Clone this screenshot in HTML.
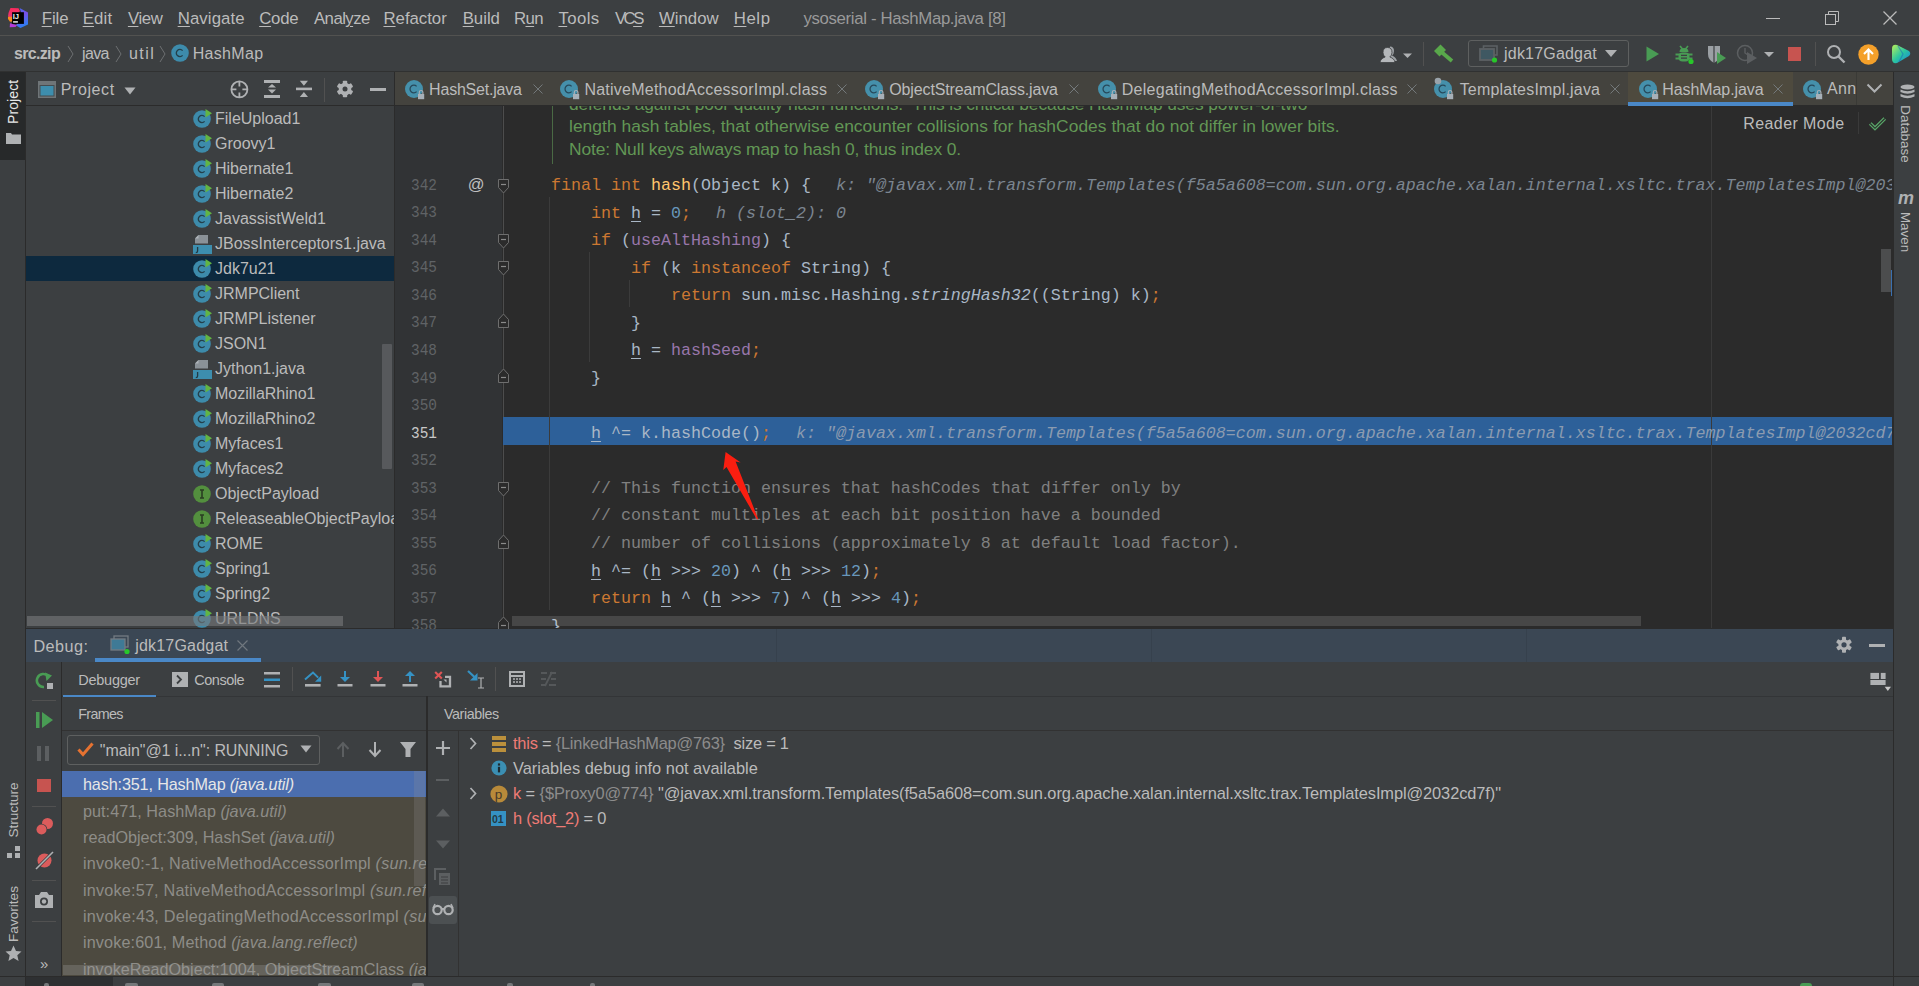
<!DOCTYPE html><html><head><meta charset="utf-8"><style>html,body{margin:0;padding:0;width:1919px;height:986px;overflow:hidden;background:#3c3f41;}body>div,body>svg{position:absolute;}.t{white-space:pre;font-family:"Liberation Sans",sans-serif;}.m{white-space:pre;font-family:"Liberation Mono",monospace;font-size:16.67px;}</style></head><body><div style="left:0px;top:35px;width:1919px;height:1px;background:#525250;"></div><div style="left:0px;top:71px;width:1919px;height:1px;background:#303131;"></div><svg style="left:7px;top:7px;" width="22" height="22" viewBox="0 0 22 22">
<defs><linearGradient id="lgb" x1="0" y1="0" x2="0.3" y2="1"><stop offset="0" stop-color="#3a6df0"/><stop offset="0.45" stop-color="#7a4fe6"/><stop offset="1" stop-color="#2f7df2"/></linearGradient>
<linearGradient id="lgp" x1="0" y1="0" x2="0" y2="1"><stop offset="0" stop-color="#ff2a5c"/><stop offset="1" stop-color="#e0357a"/></linearGradient></defs>
<polygon points="12.6,1 21,5.5 21,17.5 13.5,21 9.2,18.6 14,5" fill="url(#lgb)"/>
<polygon points="3.5,1 11.5,1.3 13,4 6,12 1,9.5 1.5,6" fill="url(#lgp)"/>
<polygon points="1,9.8 5.5,9.8 5.5,14.5 3,14.8 1,12" fill="#f98a1d"/>
<polygon points="3,16.2 10,18.3 8.5,20 2.7,20.3" fill="#b53ad8"/>
<rect x="5.1" y="5.2" width="11.8" height="11.7" fill="#000"/>
<text x="5.7" y="11.9" font-family="Liberation Sans" font-weight="bold" font-size="7.6" fill="#f2f2f2">IJ</text>
<rect x="6.1" y="14" width="4.8" height="1.8" fill="#c4c4c4"/>
</svg><div class="t" style="left:41.66px;top:9.40px;line-height:20px;font-size:16.8px;color:#bbbbbb;letter-spacing:-0.011px;text-underline-offset:2px;"><u>F</u>ile</div><div class="t" style="left:82.66px;top:9.40px;line-height:20px;font-size:16.8px;color:#bbbbbb;letter-spacing:0.177px;text-underline-offset:2px;"><u>E</u>dit</div><div class="t" style="left:127.92px;top:9.40px;line-height:20px;font-size:16.8px;color:#bbbbbb;letter-spacing:-0.345px;text-underline-offset:2px;"><u>V</u>iew</div><div class="t" style="left:177.66px;top:9.40px;line-height:20px;font-size:16.8px;color:#bbbbbb;letter-spacing:0.106px;text-underline-offset:2px;"><u>N</u>avigate</div><div class="t" style="left:259.16px;top:9.40px;line-height:20px;font-size:16.8px;color:#bbbbbb;letter-spacing:-0.213px;text-underline-offset:2px;"><u>C</u>ode</div><div class="t" style="left:314.00px;top:9.40px;line-height:20px;font-size:16.8px;color:#bbbbbb;letter-spacing:-0.575px;text-underline-offset:2px;">Anal<u>y</u>ze</div><div class="t" style="left:383.46px;top:9.40px;line-height:20px;font-size:16.8px;color:#bbbbbb;letter-spacing:-0.015px;text-underline-offset:2px;"><u>R</u>efactor</div><div class="t" style="left:462.66px;top:9.40px;line-height:20px;font-size:16.8px;color:#bbbbbb;letter-spacing:-0.007px;text-underline-offset:2px;"><u>B</u>uild</div><div class="t" style="left:514.06px;top:9.40px;line-height:20px;font-size:16.8px;color:#bbbbbb;letter-spacing:-0.688px;text-underline-offset:2px;">R<u>u</u>n</div><div class="t" style="left:558.46px;top:9.40px;line-height:20px;font-size:16.8px;color:#bbbbbb;letter-spacing:0.374px;text-underline-offset:2px;"><u>T</u>ools</div><div class="t" style="left:614.92px;top:9.40px;line-height:20px;font-size:16.8px;color:#bbbbbb;letter-spacing:-2.542px;text-underline-offset:2px;">VC<u>S</u></div><div class="t" style="left:658.92px;top:9.40px;line-height:20px;font-size:16.8px;color:#bbbbbb;letter-spacing:-0.005px;text-underline-offset:2px;"><u>W</u>indow</div><div class="t" style="left:733.66px;top:9.40px;line-height:20px;font-size:16.8px;color:#bbbbbb;letter-spacing:0.631px;text-underline-offset:2px;"><u>H</u>elp</div><div class="t" style="left:803.50px;top:9.00px;line-height:20px;font-size:16.8px;color:#9a9a9a;letter-spacing:-0.346px;">ysoserial - HashMap.java [8]</div><div style="left:1766px;top:18px;width:14px;height:1px;background:#bbbbbb;"></div><svg style="left:1824px;top:10px;" width="16" height="16" viewBox="0 0 16 16"><rect x="1.5" y="4.5" width="10" height="10" fill="none" stroke="#bbbbbb"/><path d="M4.5 4.5V1.5H14.5V11.5H11.5" fill="none" stroke="#bbbbbb"/></svg><svg style="left:1882px;top:10px;" width="16" height="16" viewBox="0 0 16 16"><path d="M1.5 1.5L14.5 14.5M14.5 1.5L1.5 14.5" stroke="#bbbbbb" stroke-width="1.3"/></svg><div class="t" style="left:13.94px;top:44.00px;line-height:20px;font-size:16px;color:#bbbbbb;letter-spacing:-0.657px;font-weight:bold;">src.zip</div><svg style="left:67px;top:45px;" width="8" height="18" viewBox="0 0 8 18"><path d="M1 1L6 9L1 17" fill="none" stroke="#6d6f71" stroke-width="1"/></svg><div class="t" style="left:82.00px;top:44.00px;line-height:20px;font-size:16px;color:#bbbbbb;letter-spacing:-0.620px;">java</div><svg style="left:115px;top:45px;" width="8" height="18" viewBox="0 0 8 18"><path d="M1 1L6 9L1 17" fill="none" stroke="#6d6f71" stroke-width="1"/></svg><div class="t" style="left:128.96px;top:44.00px;line-height:20px;font-size:16px;color:#bbbbbb;letter-spacing:1.427px;">util</div><svg style="left:159px;top:45px;" width="8" height="18" viewBox="0 0 8 18"><path d="M1 1L6 9L1 17" fill="none" stroke="#6d6f71" stroke-width="1"/></svg><svg style="left:171px;top:44px;" width="18" height="18" viewBox="0 0 18 18"><circle cx="9" cy="9" r="8.8" fill="#3d8bab"/><path d="M11.6 6.6A3.6 3.6 0 1 0 11.6 11.4" fill="none" stroke="#243f4a" stroke-width="1.35"/></svg><div class="t" style="left:192.72px;top:44.00px;line-height:20px;font-size:16px;color:#bbbbbb;letter-spacing:0.307px;">HashMap</div><svg style="left:1380px;top:45px;" width="36" height="20" viewBox="0 0 36 20"><path d="M10 1.5Q14 1.5 14 6Q14 9 12 10.5Q16 12 17 16H8Z" fill="#9ea2a6"/>
<path d="M7.5 2.5Q12 2.5 12 7.5Q12 10.5 9.8 12Q14.5 13.5 15 17.5H0Q0.5 13.5 5.2 12Q3 10.5 3 7.5Q3 2.5 7.5 2.5Z" fill="#b4b7ba" stroke="#3c3f41" stroke-width="0.8"/>
<path d="M23 8.5H32L27.5 13Z" fill="#afb1b3"/></svg><div style="left:1423px;top:42px;width:1px;height:24px;background:#515151;"></div><svg style="left:1433px;top:44px;" width="22" height="20" viewBox="0 0 22 20"><path d="M1 7L7.5 0.5L13 6L6.5 12.5Z" fill="#59a84b"/><path d="M9 8.5L19 17" stroke="#59a84b" stroke-width="3.8"/></svg><div style="left:1468px;top:40px;width:159px;height:25px;border:1px solid #5e6060;border-radius:3px;"></div><svg style="left:1479px;top:45px;" width="20" height="18" viewBox="0 0 20 18"><path d="M4.5 3.5V1H18V10H15" fill="none" stroke="#5c6164" stroke-width="1.6"/><rect x="1" y="4" width="14" height="11" fill="#3f5862" stroke="#5c6164" stroke-width="1.8"/><circle cx="15.5" cy="15" r="2.6" fill="#28c72a"/></svg><div class="t" style="left:1504.10px;top:44.20px;line-height:20px;font-size:16px;color:#bbbbbb;letter-spacing:0.186px;">jdk17Gadgat</div><svg style="left:1604px;top:49px;" width="14" height="9" viewBox="0 0 14 9"><path d="M1 1H13L7 8Z" fill="#afb1b3"/></svg><svg style="left:1646px;top:46px;" width="14" height="16" viewBox="0 0 14 16"><path d="M0.5 0.5L13 8L0.5 15.5Z" fill="#499c54"/></svg><svg style="left:1675px;top:45px;" width="22" height="20" viewBox="0 0 22 20"><path d="M5 1L7.5 4M13 1L10.5 4" stroke="#499c54" stroke-width="1.6"/><path d="M4.5 7Q4.5 3 9 3Q13.5 3 13.5 7Z" fill="#499c54"/>
<rect x="3.5" y="7.5" width="11" height="9" rx="4" fill="#499c54"/><path d="M0.5 9.5H17.5M0.5 13.5H17.5" stroke="#499c54" stroke-width="1.8"/><path d="M6 10.3H12M6 13.2H12" stroke="#3c3f41" stroke-width="1.2"/><circle cx="16" cy="16.5" r="2.6" fill="#28c72a"/></svg><svg style="left:1706px;top:44px;" width="22" height="21" viewBox="0 0 22 21"><path d="M2 2H14V10Q14 16 8 19Q2 16 2 10Z" fill="#9ba0a4"/><path d="M8 2V19" stroke="#3c3f41" stroke-width="1.2"/><path d="M11 8L20 14L11 20Z" fill="#499c54"/></svg><svg style="left:1736px;top:44px;" width="40" height="21" viewBox="0 0 40 21"><circle cx="9" cy="9" r="7.5" fill="none" stroke="#5c5f61" stroke-width="1.5"/><path d="M9 4V9L12 11" stroke="#5c5f61" stroke-width="1.4" fill="none"/><path d="M11 8L21 14L11 20Z" fill="#5c5f61"/><path d="M28 8H38L33 13Z" fill="#afb1b3"/></svg><div style="left:1788px;top:47px;width:13px;height:14px;background:#c75450;"></div><div style="left:1815px;top:42px;width:1px;height:24px;background:#515151;"></div><svg style="left:1826px;top:44px;" width="21" height="20" viewBox="0 0 21 20"><circle cx="8" cy="8" r="6" fill="none" stroke="#afb1b3" stroke-width="2"/><path d="M12.5 12.5L18.5 18.5" stroke="#afb1b3" stroke-width="2.4"/></svg><svg style="left:1858px;top:44px;" width="21" height="21" viewBox="0 0 21 21"><circle cx="10.5" cy="10.5" r="10.2" fill="#f4a02a"/><path d="M10.5 16V6M6 10L10.5 5.5L15 10" stroke="#fff" stroke-width="2.1" fill="none"/></svg><svg style="left:1891px;top:43px;" width="21" height="22" viewBox="0 0 21 22"><defs><linearGradient id="cwm" x1="0" y1="0" x2="1" y2="1"><stop offset="0" stop-color="#b8f05a"/><stop offset="0.5" stop-color="#2bc6a0"/><stop offset="1" stop-color="#1a7fe0"/></linearGradient></defs>
<path d="M1 6Q1 1 6 2L18 8Q20.5 10.5 18 13L6 20Q1 21 1 16Z" fill="url(#cwm)"/><path d="M7 3L12 11L8 19" fill="none" stroke="#1a5fc0" stroke-width="1.2" opacity="0.5"/></svg><div style="left:25px;top:72px;width:1px;height:914px;background:#2b2b2b;"></div><div style="left:0px;top:72px;width:25px;height:88px;background:#27292a;"></div><div class="t" style="left:-9.3px;top:92.4px;width:44px;height:20px;line-height:20px;font-size:14px;letter-spacing:0.1px;color:#e8e8e8;transform:rotate(-90deg);text-align:center;">Project</div><svg style="left:6px;top:131px;" width="15" height="14" viewBox="0 0 15 14"><path d="M0 2H5L6 3.5H15V13H0Z" fill="#afb1b3"/></svg><div class="t" style="left:-16px;top:799.5px;width:60px;height:20px;line-height:20px;font-size:13.6px;color:#bbbbbb;transform:rotate(-90deg);text-align:center;">Structure</div><svg style="left:7px;top:846px;" width="14" height="13" viewBox="0 0 14 13"><rect x="8" y="0" width="5" height="5" fill="#afb1b3"/><rect x="0" y="7" width="5" height="5" fill="#afb1b3"/><rect x="8" y="7" width="5" height="5" fill="#afb1b3"/></svg><div class="t" style="left:-17px;top:903.5px;width:62px;height:20px;line-height:20px;font-size:13.6px;color:#bbbbbb;transform:rotate(-90deg);text-align:center;">Favorites</div><svg style="left:5px;top:945px;" width="17" height="17" viewBox="0 0 17 17"><path d="M8.5 0.5L11 6L16.5 6.5L12.3 10.2L13.6 16L8.5 13L3.4 16L4.7 10.2L0.5 6.5L6 6Z" fill="#afb1b3"/></svg><div style="left:26px;top:105px;width:368px;height:1px;background:#2b2b2b;"></div><div style="left:394px;top:72px;width:1px;height:556px;background:#2b2b2b;"></div><svg style="left:38px;top:81px;" width="18" height="17" viewBox="0 0 18 17"><rect x="0" y="0" width="18" height="17" fill="#6f7578"/><rect x="1.5" y="4" width="15" height="11.5" fill="#464c4f"/><rect x="2.5" y="5" width="13" height="9.5" fill="#3d8eae"/></svg><div class="t" style="left:60.72px;top:80.30px;line-height:20px;font-size:16px;color:#bbbbbb;letter-spacing:0.600px;">Project</div><svg style="left:124px;top:86.5px;" width="12" height="8" viewBox="0 0 12 8"><path d="M0.5 0.5H11.5L6 7.5Z" fill="#afb1b3"/></svg><svg style="left:229.5px;top:79.5px;" width="19" height="19" viewBox="0 0 19 19"><circle cx="9.4" cy="9.4" r="8" fill="none" stroke="#afb1b3" stroke-width="1.8"/><path d="M9.4 1.5V6.4M9.4 12.4V17.3M1.5 9.4H6.4M12.4 9.4H17.3" stroke="#afb1b3" stroke-width="1.8"/></svg><svg style="left:264px;top:79px;" width="17" height="20" viewBox="0 0 17 20"><rect x="0" y="1" width="16" height="3" fill="#afb1b3"/><rect x="0" y="16" width="16" height="3" fill="#afb1b3"/><path d="M4 8.6L8 5L12 8.6ZM4 10.4L8 14.5L12 10.4Z" fill="#afb1b3"/></svg><svg style="left:295px;top:79px;" width="18" height="20" viewBox="0 0 18 20"><rect x="1" y="8.6" width="16" height="2.6" fill="#afb1b3"/><path d="M4.8 1.8H13L8.9 6.8ZM4.8 18H13L8.9 13Z" fill="#afb1b3"/></svg><div style="left:324px;top:78px;width:1px;height:24px;background:#515151;"></div><svg style="left:336px;top:80px;" width="18" height="18" viewBox="0 0 18 18"><g transform="translate(9 9)" fill="#afb1b3"><circle r="6.3"/>
<rect x="-2.2" y="-8.2" width="4.4" height="16.4" rx="0.8"/><rect x="-2.2" y="-8.2" width="4.4" height="16.4" rx="0.8" transform="rotate(60)"/><rect x="-2.2" y="-8.2" width="4.4" height="16.4" rx="0.8" transform="rotate(120)"/>
<circle r="2.5" fill="#3c3f41"/></g></svg><div style="left:370px;top:88px;width:16px;height:3px;background:#afb1b3;"></div><div style="left:26px;top:106px;width:368px;height:522px;overflow:hidden;"><svg style="position:absolute;left:167px;top:2.5px" width="20" height="20" viewBox="0 0 20 20"><circle cx="9" cy="10" r="8.8" fill="#3d8bab"/><path d="M11.6 7.6A3.6 3.6 0 1 0 11.6 12.4" fill="none" stroke="#243f4a" stroke-width="1.35"/>
<path d="M12.5 0L19 4.2L12.5 8.4Z" fill="#62b543"/></svg><div class="t" style="position:absolute;left:189px;top:2.5px;line-height:20px;font-size:16px;color:#bbbbbb;">FileUpload1</div><svg style="position:absolute;left:167px;top:27.5px" width="20" height="20" viewBox="0 0 20 20"><circle cx="9" cy="10" r="8.8" fill="#3d8bab"/><path d="M11.6 7.6A3.6 3.6 0 1 0 11.6 12.4" fill="none" stroke="#243f4a" stroke-width="1.35"/>
<path d="M12.5 0L19 4.2L12.5 8.4Z" fill="#62b543"/></svg><div class="t" style="position:absolute;left:189px;top:27.5px;line-height:20px;font-size:16px;color:#bbbbbb;">Groovy1</div><svg style="position:absolute;left:167px;top:52.5px" width="20" height="20" viewBox="0 0 20 20"><circle cx="9" cy="10" r="8.8" fill="#3d8bab"/><path d="M11.6 7.6A3.6 3.6 0 1 0 11.6 12.4" fill="none" stroke="#243f4a" stroke-width="1.35"/>
<path d="M12.5 0L19 4.2L12.5 8.4Z" fill="#62b543"/></svg><div class="t" style="position:absolute;left:189px;top:52.5px;line-height:20px;font-size:16px;color:#bbbbbb;">Hibernate1</div><svg style="position:absolute;left:167px;top:77.5px" width="20" height="20" viewBox="0 0 20 20"><circle cx="9" cy="10" r="8.8" fill="#3d8bab"/><path d="M11.6 7.6A3.6 3.6 0 1 0 11.6 12.4" fill="none" stroke="#243f4a" stroke-width="1.35"/>
<path d="M12.5 0L19 4.2L12.5 8.4Z" fill="#62b543"/></svg><div class="t" style="position:absolute;left:189px;top:77.5px;line-height:20px;font-size:16px;color:#bbbbbb;">Hibernate2</div><svg style="position:absolute;left:167px;top:102.5px" width="20" height="20" viewBox="0 0 20 20"><circle cx="9" cy="10" r="8.8" fill="#3d8bab"/><path d="M11.6 7.6A3.6 3.6 0 1 0 11.6 12.4" fill="none" stroke="#243f4a" stroke-width="1.35"/>
<path d="M12.5 0L19 4.2L12.5 8.4Z" fill="#62b543"/></svg><div class="t" style="position:absolute;left:189px;top:102.5px;line-height:20px;font-size:16px;color:#bbbbbb;">JavassistWeld1</div><svg style="position:absolute;left:167px;top:127.5px" width="20" height="20" viewBox="0 0 20 20"><path d="M5.5 1H15V9.5H2V4.5Z" fill="#8a9197"/><path d="M5.5 1V4.5H2Z" fill="#aeb4b9"/><rect x="0" y="11" width="19" height="9" fill="#3d8eae"/><path d="M4.6 13V17Q4.6 18.6 2.8 18.6" stroke="#233a44" stroke-width="1.3" fill="none"/></svg><div class="t" style="position:absolute;left:189px;top:127.5px;line-height:20px;font-size:16px;color:#bbbbbb;">JBossInterceptors1.java</div><div style="position:absolute;left:0px;top:150.0px;width:368px;height:25px;background:#0d293e;"></div><svg style="position:absolute;left:167px;top:152.5px" width="20" height="20" viewBox="0 0 20 20"><circle cx="9" cy="10" r="8.8" fill="#3d8bab"/><path d="M11.6 7.6A3.6 3.6 0 1 0 11.6 12.4" fill="none" stroke="#243f4a" stroke-width="1.35"/>
<path d="M12.5 0L19 4.2L12.5 8.4Z" fill="#62b543"/></svg><div class="t" style="position:absolute;left:189px;top:152.5px;line-height:20px;font-size:16px;color:#bbbbbb;">Jdk7u21</div><svg style="position:absolute;left:167px;top:177.5px" width="20" height="20" viewBox="0 0 20 20"><circle cx="9" cy="10" r="8.8" fill="#3d8bab"/><path d="M11.6 7.6A3.6 3.6 0 1 0 11.6 12.4" fill="none" stroke="#243f4a" stroke-width="1.35"/>
<path d="M12.5 0L19 4.2L12.5 8.4Z" fill="#62b543"/></svg><div class="t" style="position:absolute;left:189px;top:177.5px;line-height:20px;font-size:16px;color:#bbbbbb;">JRMPClient</div><svg style="position:absolute;left:167px;top:202.5px" width="20" height="20" viewBox="0 0 20 20"><circle cx="9" cy="10" r="8.8" fill="#3d8bab"/><path d="M11.6 7.6A3.6 3.6 0 1 0 11.6 12.4" fill="none" stroke="#243f4a" stroke-width="1.35"/>
<path d="M12.5 0L19 4.2L12.5 8.4Z" fill="#62b543"/></svg><div class="t" style="position:absolute;left:189px;top:202.5px;line-height:20px;font-size:16px;color:#bbbbbb;">JRMPListener</div><svg style="position:absolute;left:167px;top:227.5px" width="20" height="20" viewBox="0 0 20 20"><circle cx="9" cy="10" r="8.8" fill="#3d8bab"/><path d="M11.6 7.6A3.6 3.6 0 1 0 11.6 12.4" fill="none" stroke="#243f4a" stroke-width="1.35"/>
<path d="M12.5 0L19 4.2L12.5 8.4Z" fill="#62b543"/></svg><div class="t" style="position:absolute;left:189px;top:227.5px;line-height:20px;font-size:16px;color:#bbbbbb;">JSON1</div><svg style="position:absolute;left:167px;top:252.5px" width="20" height="20" viewBox="0 0 20 20"><path d="M5.5 1H15V9.5H2V4.5Z" fill="#8a9197"/><path d="M5.5 1V4.5H2Z" fill="#aeb4b9"/><rect x="0" y="11" width="19" height="9" fill="#3d8eae"/><path d="M4.6 13V17Q4.6 18.6 2.8 18.6" stroke="#233a44" stroke-width="1.3" fill="none"/></svg><div class="t" style="position:absolute;left:189px;top:252.5px;line-height:20px;font-size:16px;color:#bbbbbb;">Jython1.java</div><svg style="position:absolute;left:167px;top:277.5px" width="20" height="20" viewBox="0 0 20 20"><circle cx="9" cy="10" r="8.8" fill="#3d8bab"/><path d="M11.6 7.6A3.6 3.6 0 1 0 11.6 12.4" fill="none" stroke="#243f4a" stroke-width="1.35"/>
<path d="M12.5 0L19 4.2L12.5 8.4Z" fill="#62b543"/></svg><div class="t" style="position:absolute;left:189px;top:277.5px;line-height:20px;font-size:16px;color:#bbbbbb;">MozillaRhino1</div><svg style="position:absolute;left:167px;top:302.5px" width="20" height="20" viewBox="0 0 20 20"><circle cx="9" cy="10" r="8.8" fill="#3d8bab"/><path d="M11.6 7.6A3.6 3.6 0 1 0 11.6 12.4" fill="none" stroke="#243f4a" stroke-width="1.35"/>
<path d="M12.5 0L19 4.2L12.5 8.4Z" fill="#62b543"/></svg><div class="t" style="position:absolute;left:189px;top:302.5px;line-height:20px;font-size:16px;color:#bbbbbb;">MozillaRhino2</div><svg style="position:absolute;left:167px;top:327.5px" width="20" height="20" viewBox="0 0 20 20"><circle cx="9" cy="10" r="8.8" fill="#3d8bab"/><path d="M11.6 7.6A3.6 3.6 0 1 0 11.6 12.4" fill="none" stroke="#243f4a" stroke-width="1.35"/>
<path d="M12.5 0L19 4.2L12.5 8.4Z" fill="#62b543"/></svg><div class="t" style="position:absolute;left:189px;top:327.5px;line-height:20px;font-size:16px;color:#bbbbbb;">Myfaces1</div><svg style="position:absolute;left:167px;top:352.5px" width="20" height="20" viewBox="0 0 20 20"><circle cx="9" cy="10" r="8.8" fill="#3d8bab"/><path d="M11.6 7.6A3.6 3.6 0 1 0 11.6 12.4" fill="none" stroke="#243f4a" stroke-width="1.35"/>
<path d="M12.5 0L19 4.2L12.5 8.4Z" fill="#62b543"/></svg><div class="t" style="position:absolute;left:189px;top:352.5px;line-height:20px;font-size:16px;color:#bbbbbb;">Myfaces2</div><svg style="position:absolute;left:167px;top:377.5px" width="20" height="20" viewBox="0 0 20 20"><circle cx="9" cy="10" r="8.8" fill="#538f3e"/><path d="M7 6H11M9 6V14M7 14H11" stroke="#2a3d22" stroke-width="1.6"/></svg><div class="t" style="position:absolute;left:189px;top:377.5px;line-height:20px;font-size:16px;color:#bbbbbb;">ObjectPayload</div><svg style="position:absolute;left:167px;top:402.5px" width="20" height="20" viewBox="0 0 20 20"><circle cx="9" cy="10" r="8.8" fill="#538f3e"/><path d="M7 6H11M9 6V14M7 14H11" stroke="#2a3d22" stroke-width="1.6"/></svg><div class="t" style="position:absolute;left:189px;top:402.5px;line-height:20px;font-size:16px;color:#bbbbbb;">ReleaseableObjectPayload</div><svg style="position:absolute;left:167px;top:427.5px" width="20" height="20" viewBox="0 0 20 20"><circle cx="9" cy="10" r="8.8" fill="#3d8bab"/><path d="M11.6 7.6A3.6 3.6 0 1 0 11.6 12.4" fill="none" stroke="#243f4a" stroke-width="1.35"/>
<path d="M12.5 0L19 4.2L12.5 8.4Z" fill="#62b543"/></svg><div class="t" style="position:absolute;left:189px;top:427.5px;line-height:20px;font-size:16px;color:#bbbbbb;">ROME</div><svg style="position:absolute;left:167px;top:452.5px" width="20" height="20" viewBox="0 0 20 20"><circle cx="9" cy="10" r="8.8" fill="#3d8bab"/><path d="M11.6 7.6A3.6 3.6 0 1 0 11.6 12.4" fill="none" stroke="#243f4a" stroke-width="1.35"/>
<path d="M12.5 0L19 4.2L12.5 8.4Z" fill="#62b543"/></svg><div class="t" style="position:absolute;left:189px;top:452.5px;line-height:20px;font-size:16px;color:#bbbbbb;">Spring1</div><svg style="position:absolute;left:167px;top:477.5px" width="20" height="20" viewBox="0 0 20 20"><circle cx="9" cy="10" r="8.8" fill="#3d8bab"/><path d="M11.6 7.6A3.6 3.6 0 1 0 11.6 12.4" fill="none" stroke="#243f4a" stroke-width="1.35"/>
<path d="M12.5 0L19 4.2L12.5 8.4Z" fill="#62b543"/></svg><div class="t" style="position:absolute;left:189px;top:477.5px;line-height:20px;font-size:16px;color:#bbbbbb;">Spring2</div><svg style="position:absolute;left:167px;top:502.5px" width="20" height="20" viewBox="0 0 20 20"><circle cx="9" cy="10" r="8.8" fill="#3d8bab"/><path d="M11.6 7.6A3.6 3.6 0 1 0 11.6 12.4" fill="none" stroke="#243f4a" stroke-width="1.35"/>
<path d="M12.5 0L19 4.2L12.5 8.4Z" fill="#62b543"/></svg><div class="t" style="position:absolute;left:189px;top:502.5px;line-height:20px;font-size:16px;color:#bbbbbb;">URLDNS</div></div><div style="left:382px;top:344px;width:10px;height:125px;background:rgba(110,112,114,0.55);border-radius:1px;"></div><div style="left:27px;top:616px;width:316px;height:10px;background:rgba(120,122,124,0.6);"></div><div style="left:395px;top:72px;width:1498px;height:33px;background:#44433e;"></div><div style="left:395px;top:105px;width:1498px;height:1px;background:#2b2b2b;"></div><div style="left:1628px;top:72px;width:165px;height:33px;background:#4e4a3e;"></div><div style="left:1628px;top:102px;width:165px;height:4px;background:#4a88c7;"></div><svg style="left:405.3px;top:79px;" width="21" height="21" viewBox="0 0 21 21"><circle cx="9" cy="10" r="9" fill="#4590ab"/><path d="M11.6 7.4A3.8 3.8 0 1 0 11.6 12.6" fill="none" stroke="#27485a" stroke-width="1.25"/>
<rect x="13" y="15" width="6.2" height="5.2" fill="#a7b0b8"/><path d="M14.3 15V13.3A1.8 1.8 0 0 1 17.9 13.3V15" fill="none" stroke="#a7b0b8" stroke-width="1.2"/></svg><div class="t" style="left:429.12px;top:80.00px;line-height:20px;font-size:16px;color:#bbbbbb;letter-spacing:-0.213px;">HashSet.java</div><svg style="left:532.5px;top:84px;" width="10" height="10" viewBox="0 0 10 10"><path d="M0.5 0.5L9.5 9.5M9.5 0.5L0.5 9.5" stroke="#73787a" stroke-width="1"/></svg><svg style="left:560.3px;top:79px;" width="21" height="21" viewBox="0 0 21 21"><circle cx="9" cy="10" r="9" fill="#4590ab"/><path d="M11.6 7.4A3.8 3.8 0 1 0 11.6 12.6" fill="none" stroke="#27485a" stroke-width="1.25"/>
<rect x="13" y="15" width="6.2" height="5.2" fill="#a7b0b8"/><path d="M14.3 15V13.3A1.8 1.8 0 0 1 17.9 13.3V15" fill="none" stroke="#a7b0b8" stroke-width="1.2"/></svg><div class="t" style="left:584.42px;top:80.00px;line-height:20px;font-size:16px;color:#bbbbbb;letter-spacing:0.240px;">NativeMethodAccessorImpl.class</div><svg style="left:837px;top:84px;" width="10" height="10" viewBox="0 0 10 10"><path d="M0.5 0.5L9.5 9.5M9.5 0.5L0.5 9.5" stroke="#73787a" stroke-width="1"/></svg><svg style="left:864.9px;top:79px;" width="21" height="21" viewBox="0 0 21 21"><circle cx="9" cy="10" r="9" fill="#4590ab"/><path d="M11.6 7.4A3.8 3.8 0 1 0 11.6 12.6" fill="none" stroke="#27485a" stroke-width="1.25"/>
<rect x="13" y="15" width="6.2" height="5.2" fill="#a7b0b8"/><path d="M14.3 15V13.3A1.8 1.8 0 0 1 17.9 13.3V15" fill="none" stroke="#a7b0b8" stroke-width="1.2"/></svg><div class="t" style="left:889.28px;top:80.00px;line-height:20px;font-size:16px;color:#bbbbbb;letter-spacing:-0.137px;">ObjectStreamClass.java</div><svg style="left:1069px;top:84px;" width="10" height="10" viewBox="0 0 10 10"><path d="M0.5 0.5L9.5 9.5M9.5 0.5L0.5 9.5" stroke="#73787a" stroke-width="1"/></svg><svg style="left:1098.3px;top:79px;" width="21" height="21" viewBox="0 0 21 21"><circle cx="9" cy="10" r="9" fill="#4590ab"/><path d="M11.6 7.4A3.8 3.8 0 1 0 11.6 12.6" fill="none" stroke="#27485a" stroke-width="1.25"/>
<rect x="13" y="15" width="6.2" height="5.2" fill="#a7b0b8"/><path d="M14.3 15V13.3A1.8 1.8 0 0 1 17.9 13.3V15" fill="none" stroke="#a7b0b8" stroke-width="1.2"/></svg><div class="t" style="left:1121.72px;top:80.00px;line-height:20px;font-size:16px;color:#bbbbbb;letter-spacing:0.274px;">DelegatingMethodAccessorImpl.class</div><svg style="left:1407px;top:84px;" width="10" height="10" viewBox="0 0 10 10"><path d="M0.5 0.5L9.5 9.5M9.5 0.5L0.5 9.5" stroke="#73787a" stroke-width="1"/></svg><svg style="left:1434.3px;top:79px;" width="21" height="21" viewBox="0 0 21 21"><circle cx="9" cy="10" r="9" fill="#4590ab"/><path d="M11.6 7.4A3.8 3.8 0 1 0 11.6 12.6" fill="none" stroke="#27485a" stroke-width="1.25"/>
<rect x="13" y="15" width="6.2" height="5.2" fill="#a7b0b8"/><path d="M14.3 15V13.3A1.8 1.8 0 0 1 17.9 13.3V15" fill="none" stroke="#a7b0b8" stroke-width="1.2"/></svg><div class="t" style="left:1459.68px;top:80.00px;line-height:20px;font-size:16px;color:#bbbbbb;letter-spacing:0.198px;">TemplatesImpl.java</div><svg style="left:1610px;top:84px;" width="10" height="10" viewBox="0 0 10 10"><path d="M0.5 0.5L9.5 9.5M9.5 0.5L0.5 9.5" stroke="#73787a" stroke-width="1"/></svg><svg style="left:1639.3px;top:79px;" width="21" height="21" viewBox="0 0 21 21"><circle cx="9" cy="10" r="9" fill="#4590ab"/><path d="M11.6 7.4A3.8 3.8 0 1 0 11.6 12.6" fill="none" stroke="#27485a" stroke-width="1.25"/>
<rect x="13" y="15" width="6.2" height="5.2" fill="#a7b0b8"/><path d="M14.3 15V13.3A1.8 1.8 0 0 1 17.9 13.3V15" fill="none" stroke="#a7b0b8" stroke-width="1.2"/></svg><div class="t" style="left:1662.32px;top:80.00px;line-height:20px;font-size:16px;color:#bbbbbb;letter-spacing:-0.087px;">HashMap.java</div><svg style="left:1773px;top:84px;" width="10" height="10" viewBox="0 0 10 10"><path d="M0.5 0.5L9.5 9.5M9.5 0.5L0.5 9.5" stroke="#73787a" stroke-width="1"/></svg><svg style="left:1434px;top:77px;" width="8" height="8" viewBox="0 0 8 8"><circle cx="4" cy="4" r="3.3" fill="#9aa3aa"/></svg><div style="left:1803px;top:72px;width:53px;height:33px;overflow:hidden;"><svg style="position:absolute;left:-0.5px;top:7px" width="21" height="21" viewBox="0 0 21 21"><circle cx="9" cy="10" r="9" fill="#4590ab"/><path d="M11.6 7.4A3.8 3.8 0 1 0 11.6 12.6" fill="none" stroke="#27485a" stroke-width="1.25"/>
<rect x="13" y="15" width="6.2" height="5.2" fill="#a7b0b8"/><path d="M14.3 15V13.3A1.8 1.8 0 0 1 17.9 13.3V15" fill="none" stroke="#a7b0b8" stroke-width="1.2"/></svg><div class="t" style="position:absolute;left:24px;top:7px;line-height:20px;font-size:16px;letter-spacing:0.35px;color:#bbbbbb;">AnnotationInvocationHandler.class</div></div><div style="left:1856px;top:72px;width:1px;height:33px;background:#3a3a36;"></div><svg style="left:1866px;top:83px;" width="17" height="11" viewBox="0 0 17 11"><path d="M1.5 1.5L8.5 8.5L15.5 1.5" fill="none" stroke="#afb1b3" stroke-width="2"/></svg><div style="left:395px;top:106px;width:107px;height:522px;background:#313335;"></div><div style="left:502px;top:106px;width:1391px;height:522px;background:#2b2b2b;"></div><div style="left:1893px;top:72px;width:1px;height:914px;background:#2b2b2b;"></div><div style="left:26px;top:628px;width:1867px;height:1px;background:#2b2b2b;"></div><div style="left:503px;top:416.97px;width:1389px;height:28px;background:#2d6099;"></div><div style="left:503px;top:106px;width:1px;height:522px;background:#4d4d4d;"></div><div style="left:503px;top:416.97px;width:1px;height:28px;background:#2d6099;"></div><div style="left:1711px;top:106px;width:1px;height:522px;background:#3a3a3a;"></div><div style="left:549px;top:197px;width:1px;height:413px;background:#3b3b3b;"></div><div style="left:589px;top:252px;width:1px;height:110px;background:#3b3b3b;"></div><div style="left:629px;top:280px;width:1px;height:27px;background:#3b3b3b;"></div><div style="left:552px;top:106px;width:1px;height:58px;background:#4a6a44;"></div><div style="left:560px;top:106px;width:1150px;height:58px;overflow:hidden;"><div class="t" style="position:absolute;left:9px;top:-12.90px;line-height:22px;font-size:17.4px;letter-spacing:-0.12px;color:#629755;">defends against poor quality hash functions.  This is critical because HashMap uses power-of-two</div><div class="t" style="position:absolute;left:9px;top:9.40px;line-height:22px;font-size:17.4px;letter-spacing:0.043px;color:#629755;">length hash tables, that otherwise encounter collisions for hashCodes that do not differ in lower bits.</div><div class="t" style="position:absolute;left:9px;top:31.70px;line-height:22px;font-size:17.4px;letter-spacing:-0.124px;color:#629755;">Note: Null keys always map to hash 0, thus index 0.</div></div><div class="m" style="left:402px;top:171.80px;width:35px;text-align:right;line-height:28px;font-size:16.4px;color:#606366;transform:scaleX(0.88);transform-origin:100% 50%;">342</div><div class="m" style="left:402px;top:199.33px;width:35px;text-align:right;line-height:28px;font-size:16.4px;color:#606366;transform:scaleX(0.88);transform-origin:100% 50%;">343</div><div class="m" style="left:402px;top:226.86px;width:35px;text-align:right;line-height:28px;font-size:16.4px;color:#606366;transform:scaleX(0.88);transform-origin:100% 50%;">344</div><div class="m" style="left:402px;top:254.39px;width:35px;text-align:right;line-height:28px;font-size:16.4px;color:#606366;transform:scaleX(0.88);transform-origin:100% 50%;">345</div><div class="m" style="left:402px;top:281.92px;width:35px;text-align:right;line-height:28px;font-size:16.4px;color:#606366;transform:scaleX(0.88);transform-origin:100% 50%;">346</div><div class="m" style="left:402px;top:309.45px;width:35px;text-align:right;line-height:28px;font-size:16.4px;color:#606366;transform:scaleX(0.88);transform-origin:100% 50%;">347</div><div class="m" style="left:402px;top:336.98px;width:35px;text-align:right;line-height:28px;font-size:16.4px;color:#606366;transform:scaleX(0.88);transform-origin:100% 50%;">348</div><div class="m" style="left:402px;top:364.51px;width:35px;text-align:right;line-height:28px;font-size:16.4px;color:#606366;transform:scaleX(0.88);transform-origin:100% 50%;">349</div><div class="m" style="left:402px;top:392.04px;width:35px;text-align:right;line-height:28px;font-size:16.4px;color:#606366;transform:scaleX(0.88);transform-origin:100% 50%;">350</div><div class="m" style="left:402px;top:419.57px;width:35px;text-align:right;line-height:28px;font-size:16.4px;color:#c8c8c8;transform:scaleX(0.88);transform-origin:100% 50%;">351</div><div class="m" style="left:402px;top:447.10px;width:35px;text-align:right;line-height:28px;font-size:16.4px;color:#606366;transform:scaleX(0.88);transform-origin:100% 50%;">352</div><div class="m" style="left:402px;top:474.63px;width:35px;text-align:right;line-height:28px;font-size:16.4px;color:#606366;transform:scaleX(0.88);transform-origin:100% 50%;">353</div><div class="m" style="left:402px;top:502.16px;width:35px;text-align:right;line-height:28px;font-size:16.4px;color:#606366;transform:scaleX(0.88);transform-origin:100% 50%;">354</div><div class="m" style="left:402px;top:529.69px;width:35px;text-align:right;line-height:28px;font-size:16.4px;color:#606366;transform:scaleX(0.88);transform-origin:100% 50%;">355</div><div class="m" style="left:402px;top:557.22px;width:35px;text-align:right;line-height:28px;font-size:16.4px;color:#606366;transform:scaleX(0.88);transform-origin:100% 50%;">356</div><div class="m" style="left:402px;top:584.75px;width:35px;text-align:right;line-height:28px;font-size:16.4px;color:#606366;transform:scaleX(0.88);transform-origin:100% 50%;">357</div><div class="m" style="left:402px;top:612.28px;width:35px;text-align:right;line-height:28px;font-size:16.4px;color:#606366;transform:scaleX(0.88);transform-origin:100% 50%;">358</div><div class="t" style="left:467.76px;top:174.00px;line-height:20px;font-size:16.5px;color:#c0c0c0;letter-spacing:0.000px;">@</div><svg style="left:498px;top:178.7px;" width="11" height="15" viewBox="0 0 11 15"><path d="M0.5 0.5H10.5V8.5L5.5 14L0.5 8.5Z" fill="#2b2b2b" stroke="#6e6e6e" stroke-width="1"/><path d="M3 5.5H8" stroke="#8a8a8a" stroke-width="1.2"/></svg><svg style="left:498px;top:233.76px;" width="11" height="15" viewBox="0 0 11 15"><path d="M0.5 0.5H10.5V8.5L5.5 14L0.5 8.5Z" fill="#2b2b2b" stroke="#6e6e6e" stroke-width="1"/><path d="M3 5.5H8" stroke="#8a8a8a" stroke-width="1.2"/></svg><svg style="left:498px;top:261.28999999999996px;" width="11" height="15" viewBox="0 0 11 15"><path d="M0.5 0.5H10.5V8.5L5.5 14L0.5 8.5Z" fill="#2b2b2b" stroke="#6e6e6e" stroke-width="1"/><path d="M3 5.5H8" stroke="#8a8a8a" stroke-width="1.2"/></svg><svg style="left:498px;top:481.53000000000003px;" width="11" height="15" viewBox="0 0 11 15"><path d="M0.5 0.5H10.5V8.5L5.5 14L0.5 8.5Z" fill="#2b2b2b" stroke="#6e6e6e" stroke-width="1"/><path d="M3 5.5H8" stroke="#8a8a8a" stroke-width="1.2"/></svg><svg style="left:498px;top:313.35px;" width="11" height="15" viewBox="0 0 11 15"><path d="M0.5 14.5H10.5V6.5L5.5 1L0.5 6.5Z" fill="#2b2b2b" stroke="#6e6e6e" stroke-width="1"/><path d="M3 9.5H8" stroke="#8a8a8a" stroke-width="1.2"/></svg><svg style="left:498px;top:368.40999999999997px;" width="11" height="15" viewBox="0 0 11 15"><path d="M0.5 14.5H10.5V6.5L5.5 1L0.5 6.5Z" fill="#2b2b2b" stroke="#6e6e6e" stroke-width="1"/><path d="M3 9.5H8" stroke="#8a8a8a" stroke-width="1.2"/></svg><svg style="left:498px;top:533.5899999999999px;" width="11" height="15" viewBox="0 0 11 15"><path d="M0.5 14.5H10.5V6.5L5.5 1L0.5 6.5Z" fill="#2b2b2b" stroke="#6e6e6e" stroke-width="1"/><path d="M3 9.5H8" stroke="#8a8a8a" stroke-width="1.2"/></svg><svg style="left:498px;top:616.1800000000001px;" width="11" height="15" viewBox="0 0 11 15"><path d="M0.5 14.5H10.5V6.5L5.5 1L0.5 6.5Z" fill="#2b2b2b" stroke="#6e6e6e" stroke-width="1"/><path d="M3 9.5H8" stroke="#8a8a8a" stroke-width="1.2"/></svg><div style="left:504px;top:106px;width:1388px;height:522px;overflow:hidden;"><div class="m" style="position:absolute;left:47px;top:66.10px;line-height:28px;"><span style="color:#cc7832;">final</span><span style="color:#a9b7c6;"> </span><span style="color:#cc7832;">int</span><span style="color:#a9b7c6;"> </span><span style="color:#ffc66d;">hash</span><span style="color:#a9b7c6;">(Object k) {</span></div><div class="m" style="position:absolute;left:47px;top:93.63px;line-height:28px;"><span style="color:#a9b7c6;">    </span><span style="color:#cc7832;">int</span><span style="color:#a9b7c6;"> </span><span style="color:#a9b7c6;text-decoration:underline;text-underline-offset:3px;">h</span><span style="color:#a9b7c6;"> = </span><span style="color:#6897bb;">0</span><span style="color:#cc7832;">;</span></div><div class="m" style="position:absolute;left:47px;top:121.16px;line-height:28px;"><span style="color:#a9b7c6;">    </span><span style="color:#cc7832;">if</span><span style="color:#a9b7c6;"> (</span><span style="color:#9876aa;">useAltHashing</span><span style="color:#a9b7c6;">) {</span></div><div class="m" style="position:absolute;left:47px;top:148.69px;line-height:28px;"><span style="color:#a9b7c6;">        </span><span style="color:#cc7832;">if</span><span style="color:#a9b7c6;"> (k </span><span style="color:#cc7832;">instanceof</span><span style="color:#a9b7c6;"> String) {</span></div><div class="m" style="position:absolute;left:47px;top:176.22px;line-height:28px;"><span style="color:#a9b7c6;">            </span><span style="color:#cc7832;">return</span><span style="color:#a9b7c6;"> sun.misc.Hashing.</span><span style="color:#a9b7c6;font-style:italic;">stringHash32</span><span style="color:#a9b7c6;">((String) k)</span><span style="color:#cc7832;">;</span></div><div class="m" style="position:absolute;left:47px;top:203.75px;line-height:28px;"><span style="color:#a9b7c6;">        }</span></div><div class="m" style="position:absolute;left:47px;top:231.28px;line-height:28px;"><span style="color:#a9b7c6;">        </span><span style="color:#a9b7c6;text-decoration:underline;text-underline-offset:3px;">h</span><span style="color:#a9b7c6;"> = </span><span style="color:#9876aa;">hashSeed</span><span style="color:#cc7832;">;</span></div><div class="m" style="position:absolute;left:47px;top:258.81px;line-height:28px;"><span style="color:#a9b7c6;">    }</span></div><div class="m" style="position:absolute;left:47px;top:313.87px;line-height:28px;"><span style="color:#a9b7c6;">    </span><span style="color:#a9b7c6;text-decoration:underline;text-underline-offset:3px;">h</span><span style="color:#a9b7c6;"> ^= k.hashCode()</span><span style="color:#cc7832;">;</span></div><div class="m" style="position:absolute;left:47px;top:368.93px;line-height:28px;"><span style="color:#808080;">    // This function ensures that hashCodes that differ only by</span></div><div class="m" style="position:absolute;left:47px;top:396.46px;line-height:28px;"><span style="color:#808080;">    // constant multiples at each bit position have a bounded</span></div><div class="m" style="position:absolute;left:47px;top:423.99px;line-height:28px;"><span style="color:#808080;">    // number of collisions (approximately 8 at default load factor).</span></div><div class="m" style="position:absolute;left:47px;top:451.52px;line-height:28px;"><span style="color:#a9b7c6;">    </span><span style="color:#a9b7c6;text-decoration:underline;text-underline-offset:3px;">h</span><span style="color:#a9b7c6;"> ^= (</span><span style="color:#a9b7c6;text-decoration:underline;text-underline-offset:3px;">h</span><span style="color:#a9b7c6;"> &gt;&gt;&gt; </span><span style="color:#6897bb;">20</span><span style="color:#a9b7c6;">) ^ (</span><span style="color:#a9b7c6;text-decoration:underline;text-underline-offset:3px;">h</span><span style="color:#a9b7c6;"> &gt;&gt;&gt; </span><span style="color:#6897bb;">12</span><span style="color:#a9b7c6;">)</span><span style="color:#cc7832;">;</span></div><div class="m" style="position:absolute;left:47px;top:479.05px;line-height:28px;"><span style="color:#a9b7c6;">    </span><span style="color:#cc7832;">return</span><span style="color:#a9b7c6;"> </span><span style="color:#a9b7c6;text-decoration:underline;text-underline-offset:3px;">h</span><span style="color:#a9b7c6;"> ^ (</span><span style="color:#a9b7c6;text-decoration:underline;text-underline-offset:3px;">h</span><span style="color:#a9b7c6;"> &gt;&gt;&gt; </span><span style="color:#6897bb;">7</span><span style="color:#a9b7c6;">) ^ (</span><span style="color:#a9b7c6;text-decoration:underline;text-underline-offset:3px;">h</span><span style="color:#a9b7c6;"> &gt;&gt;&gt; </span><span style="color:#6897bb;">4</span><span style="color:#a9b7c6;">)</span><span style="color:#cc7832;">;</span></div><div class="m" style="position:absolute;left:47px;top:506.58px;line-height:28px;"><span style="color:#a9b7c6;">}</span></div><div class="m" style="position:absolute;left:332px;top:66.10px;line-height:28px;font-style:italic;color:#7b8590;">k: &quot;@javax.xml.transform.Templates(f5a5a608=com.sun.org.apache.xalan.internal.xsltc.trax.TemplatesImpl@2032cd7f)&quot;</div><div class="m" style="position:absolute;left:212px;top:93.63px;line-height:28px;font-style:italic;color:#7b8590;">h (slot_2): 0</div><div class="m" style="position:absolute;left:292px;top:313.87px;line-height:28px;font-style:italic;color:#8b9bb0;">k: &quot;@javax.xml.transform.Templates(f5a5a608=com.sun.org.apache.xalan.internal.xsltc.trax.TemplatesImpl@2032cd7f)&quot;</div></div><svg style="left:715px;top:445px;" width="50" height="80" viewBox="0 0 50 80"><path d="M10.6 6.9L25.6 17.4L20.6 16.5L43.2 74.2L41.8 74.2L11.5 21.9L8.3 25.1Z" fill="#fa1e10"/></svg><div class="t" style="left:1743.32px;top:113.50px;line-height:20px;font-size:16px;color:#bbbbbb;letter-spacing:0.396px;">Reader Mode</div><div style="left:1858px;top:112px;width:1px;height:22px;background:#3a3a3a;"></div><svg style="left:1868px;top:116px;" width="19" height="16" viewBox="0 0 19 16"><path d="M2.2 7.5L7 12.3L16.8 2.5" fill="none" stroke="#59a869" stroke-width="3.6" stroke-linejoin="miter"/><path d="M2.2 7.5L7 12.3L16.8 2.5" fill="none" stroke="#2b2b2b" stroke-width="1.1"/></svg><div style="left:1881px;top:249px;width:10px;height:43px;background:#4c4d4e;"></div><div style="left:1891px;top:270px;width:1px;height:26px;background:#3a70b0;"></div><div style="left:512px;top:616px;width:1129px;height:10px;background:rgba(255,255,255,0.135);"></div><svg style="left:1899px;top:84px;" width="17" height="17" viewBox="0 0 17 17"><ellipse cx="8.5" cy="3" rx="7" ry="2.6" fill="#afb1b3"/><path d="M1.5 5.5Q8.5 9 15.5 5.5V8Q8.5 11.5 1.5 8Z" fill="#afb1b3"/><path d="M1.5 10Q8.5 13.5 15.5 10V12.5Q8.5 16 1.5 12.5Z" fill="#afb1b3"/></svg><div class="t" style="left:1874.8px;top:124px;width:60px;height:20px;line-height:20px;font-size:13.4px;color:#bbbbbb;transform:rotate(90deg);text-align:center;">Database</div><div class="t" style="left:1898.00px;top:187.50px;line-height:20px;font-size:18px;color:#afb1b3;font-weight:bold;font-style:italic;">m</div><div class="t" style="left:1874.8px;top:221.8px;width:60px;height:20px;line-height:20px;font-size:13.4px;color:#bbbbbb;transform:rotate(90deg);text-align:center;">Maven</div><div style="left:26px;top:629px;width:1867px;height:33px;background:#3b4754;"></div><div style="left:776px;top:629px;width:1px;height:33px;background:#36414d;"></div><div style="left:1151px;top:629px;width:1px;height:33px;background:#36414d;"></div><div style="left:1526px;top:629px;width:1px;height:33px;background:#36414d;"></div><div class="t" style="left:33.45px;top:636.00px;line-height:20px;font-size:16.2px;color:#bbbbbb;letter-spacing:0.482px;">Debug:</div><svg style="left:110px;top:635px;" width="21" height="20" viewBox="0 0 21 20"><rect x="4" y="1" width="14" height="11" fill="none" stroke="#737b82" stroke-width="1.3"/><rect x="1" y="4" width="14" height="11" fill="#3f7a96" stroke="#737b82" stroke-width="1.3"/><circle cx="17" cy="16.5" r="2.6" fill="#28c72a"/></svg><div class="t" style="left:135.15px;top:636.00px;line-height:20px;font-size:16px;color:#bbbbbb;letter-spacing:0.206px;">jdk17Gadgat</div><svg style="left:237px;top:640px;" width="11" height="11" viewBox="0 0 11 11"><path d="M0.5 0.5L10.5 10.5M10.5 0.5L0.5 10.5" stroke="#6f777e" stroke-width="1.2"/></svg><div style="left:95px;top:658px;width:166px;height:4px;background:#4a88c7;"></div><svg style="left:1835px;top:636px;" width="18" height="18" viewBox="0 0 18 18"><g transform="translate(9 8.8)" fill="#afb1b3"><circle r="5.6"/>
<rect x="-2" y="-8" width="4" height="16" rx="0.8"/><rect x="-2" y="-8" width="4" height="16" rx="0.8" transform="rotate(60)"/><rect x="-2" y="-8" width="4" height="16" rx="0.8" transform="rotate(120)"/>
<circle r="2.6" fill="#3b4754"/></g></svg><div style="left:1869px;top:644px;width:16px;height:3px;background:#afb1b3;"></div><div style="left:61px;top:662px;width:1px;height:314px;background:#2b2b2b;"></div><div style="left:62px;top:696px;width:1831px;height:1px;background:#333537;"></div><div class="t" style="left:78.24px;top:670.00px;line-height:20px;font-size:14.5px;color:#bbbbbb;letter-spacing:-0.250px;">Debugger</div><div style="left:63px;top:695px;width:93px;height:2px;background:#4a88c7;"></div><svg style="left:172px;top:672px;" width="16" height="15" viewBox="0 0 16 15"><rect x="0" y="0" width="16" height="15" fill="#afb1b3"/><path d="M5 3.5L9 7.5L5 11.5" fill="none" stroke="#3c3f41" stroke-width="1.8"/></svg><div class="t" style="left:194.28px;top:670.00px;line-height:20px;font-size:14.5px;color:#bbbbbb;letter-spacing:-0.485px;">Console</div><svg style="left:264px;top:672px;" width="16" height="16" viewBox="0 0 16 16"><rect x="0" y="0" width="16" height="2.5" fill="#afb1b3"/><rect x="0" y="6.5" width="16" height="2.5" fill="#3592c4"/><rect x="0" y="13" width="16" height="2.5" fill="#afb1b3"/></svg><div style="left:292px;top:667px;width:1px;height:24px;background:#515151;"></div><svg style="left:304px;top:670px;" width="18" height="17" viewBox="0 0 18 17"><path d="M1 9.5L9 2.6L14.2 7.6" fill="none" stroke="#3592c4" stroke-width="2"/><path d="M11 11.8H17.2V5.5Z" fill="#3592c4"/><rect x="1" y="14" width="15.6" height="2.6" fill="#afb1b3"/></svg><svg style="left:337px;top:670px;" width="16" height="17" viewBox="0 0 16 17"><path d="M8 1V8" stroke="#3592c4" stroke-width="2"/><path d="M3 7H13L8 12Z" fill="#3592c4"/><rect x="0.5" y="14" width="15" height="2.5" fill="#afb1b3"/></svg><svg style="left:370px;top:670px;" width="16" height="17" viewBox="0 0 16 17"><path d="M8 1V8" stroke="#e05555" stroke-width="2"/><path d="M3 7H13L8 12Z" fill="#e05555"/><rect x="0.5" y="14" width="15" height="2.5" fill="#afb1b3"/></svg><svg style="left:402px;top:670px;" width="16" height="17" viewBox="0 0 16 17"><path d="M8 5V12" stroke="#3592c4" stroke-width="2"/><path d="M3 6H13L8 1Z" fill="#3592c4"/><rect x="0.5" y="14" width="15" height="2.5" fill="#afb1b3"/></svg><svg style="left:434px;top:670px;" width="18" height="18" viewBox="0 0 18 18"><path d="M1.2 2L7.8 8.6M7.8 2L1.2 8.6" stroke="#e05555" stroke-width="2.1"/><path d="M6.5 11V16.3H16V6.8H11" fill="none" stroke="#afb1b3" stroke-width="2.3"/><path d="M9.5 9.5L12.5 12.5L12.5 9.5Z" fill="#afb1b3"/></svg><svg style="left:467px;top:670px;" width="19" height="19" viewBox="0 0 19 19"><path d="M1 1L8 7.5" stroke="#3592c4" stroke-width="2.2"/><path d="M10.5 3V10.5H3Z" fill="#3592c4"/><path d="M11 8H17M14 8V18M11 18H17" stroke="#afb1b3" stroke-width="1.2"/></svg><div style="left:495px;top:667px;width:1px;height:24px;background:#515151;"></div><svg style="left:509px;top:671px;" width="16" height="16" viewBox="0 0 16 16"><rect x="1" y="1" width="14" height="14" fill="none" stroke="#afb1b3" stroke-width="2"/><path d="M1 5H15" stroke="#afb1b3" stroke-width="2"/><path d="M4 8H6M7 8H9M10 8H12M4 11H6M7 11H9M10 11H12" stroke="#afb1b3" stroke-width="1.6"/></svg><svg style="left:540px;top:671px;" width="17" height="16" viewBox="0 0 17 16"><path d="M1 2H7M10 2H16M1 8H6M11 8H16M1 14H6M9 14H16M5 15L12 1" fill="none" stroke="#55585a" stroke-width="1.8"/></svg><svg style="left:1870px;top:672px;" width="22" height="20" viewBox="0 0 22 20"><rect x="0.4" y="0.9" width="8.6" height="6.1" fill="#afb1b3"/><rect x="10.8" y="0.9" width="4.8" height="6.1" fill="#afb1b3"/><rect x="0.4" y="8" width="15.2" height="5" fill="#afb1b3"/><path d="M14.7 14.8H21L17.85 19Z" fill="#c8c8c8"/></svg><svg style="left:35px;top:671px;" width="19" height="19" viewBox="0 0 19 19"><path d="M13.5 5.5A6.5 6.5 0 1 0 9 16" fill="none" stroke="#499c54" stroke-width="2.6"/><path d="M10 1.5L17 4.5L11.5 10Z" fill="#499c54"/><rect x="12" y="12" width="6" height="6" fill="#afb1b3"/></svg><div style="left:32px;top:700px;width:24px;height:1px;background:#515151;"></div><svg style="left:36px;top:712px;" width="17" height="16" viewBox="0 0 17 16"><rect x="0" y="0" width="3.5" height="16" fill="#499c54"/><path d="M6 0L17 8L6 16Z" fill="#499c54"/></svg><svg style="left:37px;top:746px;" width="14" height="15" viewBox="0 0 14 15"><rect x="0" y="0" width="4" height="15" fill="#5c5f61"/><rect x="8" y="0" width="4" height="15" fill="#5c5f61"/></svg><div style="left:37px;top:779px;width:14px;height:13px;background:#c75450;"></div><div style="left:32px;top:806px;width:24px;height:1px;background:#515151;"></div><svg style="left:35px;top:817px;" width="19" height="19" viewBox="0 0 19 19"><circle cx="12.5" cy="6.5" r="5.5" fill="#db5c5c"/><circle cx="6.5" cy="12.5" r="5.8" fill="#3c3f41"/><circle cx="6.5" cy="12.5" r="5" fill="#db5c5c"/></svg><svg style="left:35px;top:851px;" width="19" height="19" viewBox="0 0 19 19"><circle cx="9.5" cy="9.5" r="7" fill="#db5c5c"/><path d="M1 18L18 1" stroke="#3c3f41" stroke-width="3"/><path d="M1 18L18 1" stroke="#afb1b3" stroke-width="1.6"/></svg><div style="left:32px;top:880px;width:24px;height:1px;background:#515151;"></div><svg style="left:35px;top:892px;" width="18" height="16" viewBox="0 0 18 16"><path d="M0 3H4L6 0H12L14 3H18V16H0Z" fill="#afb1b3"/><circle cx="9" cy="9.5" r="4" fill="#3c3f41"/><circle cx="9" cy="9.5" r="2.2" fill="#afb1b3"/></svg><div style="left:32px;top:921px;width:24px;height:1px;background:#515151;"></div><div class="t" style="left:40.00px;top:954.00px;line-height:20px;font-size:15px;color:#bbbbbb;">»</div><div class="t" style="left:78.26px;top:704.20px;line-height:20px;font-size:14.3px;color:#bbbbbb;letter-spacing:-0.667px;">Frames</div><div class="t" style="left:443.93px;top:704.20px;line-height:20px;font-size:14.3px;color:#bbbbbb;letter-spacing:-0.411px;">Variables</div><div style="left:62px;top:730px;width:1831px;height:1px;background:#323232;"></div><div style="left:426px;top:696px;width:2px;height:280px;background:#2b2b2b;"></div><div style="left:458px;top:731px;width:1px;height:245px;background:#323232;"></div><div style="left:67px;top:735px;width:251px;height:28px;border:1px solid #5e6060;border-radius:3px;"></div><svg style="left:77px;top:742px;" width="17" height="15" viewBox="0 0 17 15"><path d="M1.5 7.5L6 12.5L15.5 1.5" fill="none" stroke="#e57231" stroke-width="3"/></svg><div class="t" style="left:99.86px;top:740.50px;line-height:20px;font-size:16px;color:#bbbbbb;letter-spacing:-0.086px;">&quot;main&quot;@1 i...n&quot;: RUNNING</div><svg style="left:300px;top:745px;" width="12" height="8" viewBox="0 0 12 8"><path d="M0.5 0.5H11.5L6 7.5Z" fill="#afb1b3"/></svg><svg style="left:336px;top:741px;" width="14" height="17" viewBox="0 0 14 17"><path d="M7 3V16" stroke="#5c5f61" stroke-width="2"/><path d="M1.5 8L7 2L12.5 8" fill="none" stroke="#5c5f61" stroke-width="2"/></svg><svg style="left:368px;top:741px;" width="14" height="17" viewBox="0 0 14 17"><path d="M7 1V14" stroke="#afb1b3" stroke-width="2"/><path d="M1.5 9L7 15L12.5 9" fill="none" stroke="#afb1b3" stroke-width="2"/></svg><svg style="left:400px;top:742px;" width="16" height="16" viewBox="0 0 16 16"><path d="M0 0H16L10.5 7V15H5.5V7Z" fill="#afb1b3"/></svg><div style="left:62px;top:771px;width:364px;height:205px;overflow:hidden;background:#4d4a40;"><div style="position:absolute;left:0;top:0;width:364px;height:26px;background:#4b6eaf;"></div><div class="t" style="position:absolute;left:21px;top:3.40px;line-height:20px;font-size:16.2px;letter-spacing:-0.14px;color:#e6e6e6;">hash:351, HashMap <i>(java.util)</i></div><div class="t" style="position:absolute;left:21px;top:29.70px;line-height:20px;font-size:16.2px;letter-spacing:0.04px;color:#8e8d88;">put:471, HashMap <i>(java.util)</i></div><div class="t" style="position:absolute;left:21px;top:56.00px;line-height:20px;font-size:16.2px;letter-spacing:0px;color:#8e8d88;">readObject:309, HashSet <i>(java.util)</i></div><div class="t" style="position:absolute;left:21px;top:82.30px;line-height:20px;font-size:16.2px;letter-spacing:0.2px;color:#8e8d88;">invoke0:-1, NativeMethodAccessorImpl <i>(sun.reflect)</i></div><div class="t" style="position:absolute;left:21px;top:108.60px;line-height:20px;font-size:16.2px;letter-spacing:0.2px;color:#8e8d88;">invoke:57, NativeMethodAccessorImpl <i>(sun.reflect)</i></div><div class="t" style="position:absolute;left:21px;top:134.90px;line-height:20px;font-size:16.2px;letter-spacing:0.23px;color:#8e8d88;">invoke:43, DelegatingMethodAccessorImpl <i>(sun.reflect)</i></div><div class="t" style="position:absolute;left:21px;top:161.20px;line-height:20px;font-size:16.2px;letter-spacing:0.13px;color:#8e8d88;">invoke:601, Method <i>(java.lang.reflect)</i></div><div class="t" style="position:absolute;left:21px;top:187.50px;line-height:20px;font-size:16.2px;letter-spacing:0px;color:#8e8d88;">invokeReadObject:1004, ObjectStreamClass <i>(java.io)</i></div><div style="position:absolute;left:352px;top:0;width:11px;height:115px;background:rgba(150,150,150,0.22);"></div><div style="position:absolute;left:1px;top:193.5px;width:276px;height:10.5px;background:rgba(160,160,160,0.3);"></div></div><svg style="left:436px;top:741px;" width="14" height="14" viewBox="0 0 14 14"><path d="M7 0V14M0 7H14" stroke="#afb1b3" stroke-width="2.2"/></svg><div style="left:436px;top:779px;width:13px;height:2px;background:#5c5f61;"></div><svg style="left:436px;top:808px;" width="14" height="9" viewBox="0 0 14 9"><path d="M0 8.5H14L7 0.5Z" fill="#5c5f61"/></svg><svg style="left:436px;top:840px;" width="14" height="9" viewBox="0 0 14 9"><path d="M0 0.5H14L7 8.5Z" fill="#5c5f61"/></svg><svg style="left:434px;top:868px;" width="17" height="18" viewBox="0 0 17 18"><path d="M1 12V1H12" fill="none" stroke="#5c5f61" stroke-width="2"/><rect x="5" y="5" width="11" height="12" fill="#5c5f61"/><path d="M7 9H14M7 12H14M7 15H14" stroke="#3c3f41" stroke-width="1"/></svg><div style="left:429px;top:896px;width:28px;height:28px;background:#4c5052;border-radius:3px;"></div><svg style="left:432px;top:903px;" width="22" height="13" viewBox="0 0 22 13"><circle cx="5.5" cy="7" r="4.2" fill="none" stroke="#afb1b3" stroke-width="2.2"/><circle cx="16.5" cy="7" r="4.2" fill="none" stroke="#afb1b3" stroke-width="2.2"/><path d="M9.5 6H12.5" stroke="#afb1b3" stroke-width="2"/><path d="M1 5L3 1M21 5L19 1" stroke="#afb1b3" stroke-width="1.5"/></svg><svg style="left:469px;top:737px;" width="9" height="13" viewBox="0 0 9 13"><path d="M1.5 1L6.5 6.5L1.5 12" fill="none" stroke="#afb1b3" stroke-width="1.7"/></svg><svg style="left:492px;top:736px;" width="14" height="16" viewBox="0 0 14 16"><rect x="0" y="0" width="14" height="4" fill="#bb903c"/><rect x="0" y="6" width="14" height="4" fill="#bb903c"/><rect x="0" y="12" width="14" height="4" fill="#bb903c"/></svg><div class="t" style="left:513px;top:732.80px;line-height:20px;font-size:16.4px;color:#bbbbbb;letter-spacing:-0.22px;"><span style="color:#ee7b76">this</span> = <span style="color:#8c8c8c">{LinkedHashMap@763}</span>  size = 1</div><svg style="left:491px;top:760px;" width="16" height="16" viewBox="0 0 16 16"><circle cx="8" cy="8" r="7.6" fill="#3b8fb3"/><rect x="6.9" y="6.8" width="2.2" height="5.6" fill="#1e2b30"/><rect x="6.9" y="3.4" width="2.2" height="2.2" fill="#1e2b30"/></svg><div class="t" style="left:513px;top:757.80px;line-height:20px;font-size:16.4px;color:#bbbbbb;letter-spacing:0px;">Variables debug info not available</div><svg style="left:469px;top:787px;" width="9" height="13" viewBox="0 0 9 13"><path d="M1.5 1L6.5 6.5L1.5 12" fill="none" stroke="#afb1b3" stroke-width="1.7"/></svg><svg style="left:490px;top:785px;" width="18" height="18" viewBox="0 0 18 18"><circle cx="9" cy="9" r="8.6" fill="#b88a3a"/><text x="4.8" y="13.6" font-family="Liberation Sans" font-size="13.5" fill="#46392a">p</text></svg><div class="t" style="left:513px;top:782.80px;line-height:20px;font-size:16.4px;color:#bbbbbb;letter-spacing:-0.087px;"><span style="color:#ee7b76">k</span> = <span style="color:#8c8c8c">{$Proxy0@774}</span> "@javax.xml.transform.Templates(f5a5a608=com.sun.org.apache.xalan.internal.xsltc.trax.TemplatesImpl@2032cd7f)"</div><svg style="left:491px;top:811px;" width="15" height="15" viewBox="0 0 15 15"><rect x="0" y="0" width="15" height="15" fill="#3592c4"/><text x="1" y="12" font-family="Liberation Sans" font-size="10.5" font-weight="bold" fill="#233a44">01</text></svg><div class="t" style="left:513px;top:807.80px;line-height:20px;font-size:16.4px;color:#bbbbbb;letter-spacing:-0.21px;"><span style="color:#ee7b76">h (slot_2)</span> = 0</div><div style="left:0px;top:976px;width:1919px;height:1px;background:#2b2b2b;"></div><div style="left:26px;top:977px;width:87px;height:9px;background:#2e3032;"></div><div style="left:44px;top:983px;width:5px;height:3px;background:#75787a;border-radius:2px 2px 0 0;"></div><div style="left:125px;top:983px;width:13px;height:3px;background:#75787a;border-radius:2px 2px 0 0;"></div><div style="left:212px;top:983px;width:12px;height:3px;background:#75787a;border-radius:2px 2px 0 0;"></div><div style="left:318px;top:983px;width:13px;height:3px;background:#75787a;border-radius:2px 2px 0 0;"></div><div style="left:412px;top:983px;width:12px;height:3px;background:#75787a;border-radius:2px 2px 0 0;"></div><div style="left:507px;top:983px;width:6px;height:3px;background:#75787a;border-radius:2px 2px 0 0;"></div><div style="left:590px;top:983px;width:5px;height:3px;background:#75787a;border-radius:2px 2px 0 0;"></div><div style="left:1800px;top:983px;width:12px;height:3px;background:#499c54;border-radius:6px 6px 0 0;"></div></body></html>
